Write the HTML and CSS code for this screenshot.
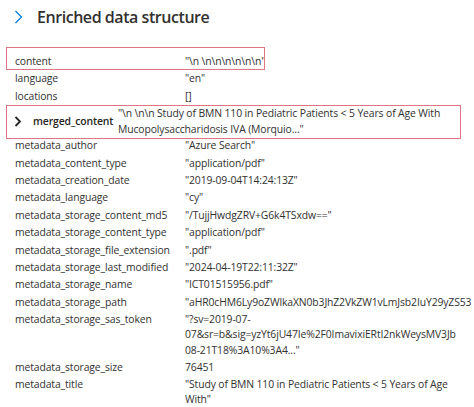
FILE: index.html
```html
<!DOCTYPE html>
<html lang="en">
<head>
<meta charset="utf-8">
<title>Enriched data structure</title>
<link rel="stylesheet" href="styles.css">
</head>
<body>
<div class="page">
  <header class="header">
    <svg class="title-chevron" width="9" height="14" viewBox="0 0 9 14"><polyline points="1.5,1 7.5,7 1.5,13" fill="none" stroke="#0078d4" stroke-width="1.2"/></svg>
    <h1 class="title">Enriched data structure</h1>
  </header>

  <div class="list">
    <div class="row hl hl-short"><span class="key">content</span><span class="val">"\n \n\n\n\n\n\n"</span></div>
    <div class="row"><span class="key">language</span><span class="val">"en"</span></div>
    <div class="row"><span class="key">locations</span><span class="val">[]</span></div>
    <div class="merged hl hl-wide">
      <svg class="exp-chevron" width="8" height="11" viewBox="0 0 8 11"><polyline points="1.5,1 6,5.5 1.5,10" fill="none" stroke="#252423" stroke-width="1.8"/></svg>
      <span class="mkey">merged_content</span>
      <span class="mval">"\n \n\n Study of BMN 110 in Pediatric Patients &lt; 5 Years of Age With Mucopolysaccharidosis IVA (Morquio..."</span>
    </div>
    <div class="row"><span class="key">metadata_author</span><span class="val">"Azure Search"</span></div>
    <div class="row"><span class="key">metadata_content_type</span><span class="val">"application/pdf"</span></div>
    <div class="row"><span class="key">metadata_creation_date</span><span class="val">"2019-09-04T14:24:13Z"</span></div>
    <div class="row"><span class="key">metadata_language</span><span class="val">"cy"</span></div>
    <div class="row"><span class="key">metadata_storage_content_md5</span><span class="val">"/TujjHwdgZRV+G6k4TSxdw=="</span></div>
    <div class="row"><span class="key">metadata_storage_content_type</span><span class="val">"application/pdf"</span></div>
    <div class="row"><span class="key">metadata_storage_file_extension</span><span class="val">".pdf"</span></div>
    <div class="row"><span class="key">metadata_storage_last_modified</span><span class="val">"2024-04-19T22:11:32Z"</span></div>
    <div class="row"><span class="key">metadata_storage_name</span><span class="val">"ICT01515956.pdf"</span></div>
    <div class="row"><span class="key">metadata_storage_path</span><span class="val nowrap">"aHR0cHM6Ly9oZWlkaXN0b3JhZ2VkZW1vLmJsb2IuY29yZS53aW5kb3dzLm5ldA2"</span></div>
    <div class="row multi"><span class="key">metadata_storage_sas_token</span><span class="val nowrap">"?sv=2019-07-<br>07&amp;sr=b&amp;sig=yzYt6jU47Ie%2F0ImavixiERtI2nkWeysMV3Jb<br>08-21T18%3A10%3A4..."</span></div>
    <div class="row"><span class="key">metadata_storage_size</span><span class="val">76451</span></div>
    <div class="row multi"><span class="key">metadata_title</span><span class="val">"Study of BMN 110 in Pediatric Patients &lt; 5 Years of Age With"</span></div>
  </div>
</div>
</body>
</html>
```

FILE: styles.css
```css
html, body {
  margin: 0;
  padding: 0;
  background: #ffffff;
}

body {
  font-family: "Open Sans", "Noto Sans", sans-serif;
  color: #323130;
  width: 474px;
  height: 407px;
  overflow: hidden;
}

.page {
  width: 474px;
}

.header {
  display: flex;
  align-items: center;
  height: 33px;
  padding-left: 14px;
  gap: 14px;
}

.title-chevron {
  display: block;
  flex: none;
}

.title {
  margin: 0;
  font-size: 16px;
  font-weight: 600;
  color: #323130;
  letter-spacing: -0.45px;
}

.list {
  padding-top: 20px;
  font-size: 10.4px;
  letter-spacing: -0.12px;
}

.row {
  display: grid;
  grid-template-columns: 170px 286px;
  padding-left: 15px;
  line-height: 17.4px;
  position: relative;
}

.row.multi {
  line-height: 15.5px;
  padding: 0.5px 0 0.5px 15px;
}

.key {
  white-space: nowrap;
}

.val {
  white-space: normal;
  overflow: hidden;
}

.val.nowrap {
  white-space: nowrap;
}

.merged {
  display: flex;
  align-items: center;
  height: 32px;
  padding-left: 14px;
  position: relative;
}

.exp-chevron {
  display: block;
  flex: none;
}

.mkey {
  font-weight: 600;
  margin-left: 11px;
  width: 85px;
  flex: none;
  white-space: nowrap;
  color: #252423;
}

.mval {
  width: 330px;
  line-height: 16px;
}

.hl::after {
  content: "";
  position: absolute;
  border: 1.5px solid #e07482;
  pointer-events: none;
}

.hl-short::after {
  left: 6px;
  width: 257px;
  top: -6px;
  bottom: 0;
}

.hl-wide::after {
  left: 6px;
  width: 453px;
  top: 0;
  bottom: -2px;
}
```
